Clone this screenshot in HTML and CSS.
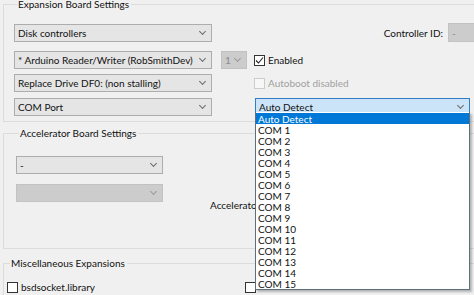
FILE: index.html
```html
<!DOCTYPE html>
<html lang="en">
<head>
  <meta charset="UTF-8" />
  <title>Expansions</title>
  <link rel="stylesheet" href="styles.css">
</head>
<body>
  <div class="window">
    <fieldset class="group group-expansion">
      <legend>Expansion Board Settings</legend>
      <div class="row row-1">
        <div class="combo wide"><span class="value">Disk controllers</span></div>
        <span class="id-label">Controller ID:</span>
        <div class="combo disabled id-box"><span class="value">-</span></div>
      </div>
      <div class="row row-2">
        <div class="combo wide"><span class="value">* Arduino Reader/Writer (RobSmithDev)</span></div>
        <div class="combo disabled tiny"><span class="value">1</span></div>
        <label class="check-item enabled-check">
          <span class="box checked">
            <svg width="9" height="9" viewBox="0 0 9 9"><path d="M1 4.5 L3.5 7 L8 1.5" fill="none" stroke="#222" stroke-width="1.1"/></svg>
          </span>
          Enabled
        </label>
      </div>
      <div class="row row-3">
        <div class="combo wide"><span class="value">Replace Drive DF0: (non stalling)</span></div>
        <label class="check-item disabled autoboot-check"><span class="box"></span>Autoboot disabled</label>
      </div>
      <div class="row row-4">
        <div class="combo wide"><span class="value">COM Port</span></div>
        <div class="combo focused port-combo"><span class="value">Auto Detect</span></div>
      </div>
    </fieldset>

    <fieldset class="group group-accel">
      <legend>Accelerator Board Settings</legend>
      <div class="accel-body">
        <div class="accel-combos">
          <div class="combo medium"><span class="value">-</span></div>
          <div class="combo medium disabled"><span class="value"></span></div>
        </div>
        <span class="accel-label">Accelerator memory:</span>
      </div>
    </fieldset>

    <fieldset class="group group-misc">
      <legend>Miscellaneous Expansions</legend>
      <div class="row misc-row">
        <label class="check-item"><span class="box"></span>bsdsocket.library</label>
        <label class="check-item second-check"><span class="box"></span></label>
      </div>
    </fieldset>

    <ul class="droplist">
      <li class="selected">Auto Detect</li>
      <li>COM 1</li>
      <li>COM 2</li>
      <li>COM 3</li>
      <li>COM 4</li>
      <li>COM 5</li>
      <li>COM 6</li>
      <li>COM 7</li>
      <li>COM 8</li>
      <li>COM 9</li>
      <li>COM 10</li>
      <li>COM 11</li>
      <li>COM 12</li>
      <li>COM 13</li>
      <li>COM 14</li>
      <li>COM 15</li>
    </ul>
  </div>
</body>
</html>
```

FILE: styles.css
```css
body {
  margin: 0;
  background: #f0f0f0;
  font-family: Lato, 'Noto Sans', sans-serif;
  font-size: 10px;
  color: #111;
  overflow: hidden;
  width: 474px;
  height: 295px;
}
.window {
  position: relative;
  height: 295px;
}
.group {
  border: 1px solid #dcdcdc;
  margin: 0 -30px 0 3px;
  padding: 0;
  min-width: 0;
}
.group legend {
  margin-left: 3px;
  padding: 0 2px 0 1px;
  line-height: 12px;
}
.group-expansion {
  margin-top: -2px;
  padding: 13px 0 5px 10px;
}
.group-accel {
  margin-top: 5px;
  padding: 17px 0 0 12px;
  height: 103px;
}
.group-misc {
  margin-top: 8px;
  padding: 12px 0 20px 3px;
}
.row {
  display: flex;
  align-items: center;
}
.row > * { flex-shrink: 0; }
.row-2 { margin-top: 9px; }
.row-3 { margin-top: 5px; }
.row-4 { margin-top: 6px; }

.combo {
  display: flex;
  align-items: center;
  box-sizing: border-box;
  height: 18px;
  padding: 0 5px 0 3px;
  background: #e5e5e5;
  border: 1px solid #adadad;
  white-space: nowrap;
  overflow: hidden;
}
.combo .value {
  flex: 1;
  overflow: hidden;
}
.combo::after {
  content: "";
  width: 4px;
  height: 4px;
  border-right: 1px solid #6a6a6a;
  border-bottom: 1px solid #6a6a6a;
  transform: rotate(45deg);
  margin: 0 1px 3px 0;
  flex-shrink: 0;
}
.combo.disabled {
  background: #cccccc;
  border-color: #c2c2c2;
  color: #8a8a8a;
}
.combo.disabled::after {
  border-color: #9a9a9a;
}
.combo.focused {
  background: #cce4f7;
  border-color: #2f7dc2;
}
.wide { width: 198px; }
.medium { width: 147px; }
.tiny {
  width: 26px;
  margin-left: 9px;
}
.id-label {
  width: 231px;
  text-align: right;
}
.id-box {
  margin-left: 5px;
  width: 60px;
  height: 19px;
}
.id-box::after {
  display: none;
}
.check-item {
  display: flex;
  align-items: center;
  gap: 3px;
  white-space: nowrap;
}
.box {
  box-sizing: border-box;
  width: 11px;
  height: 11px;
  border: 1px solid #333;
  background: #fff;
  display: flex;
  align-items: center;
  justify-content: center;
}
.enabled-check { margin-left: 7px; }
.autoboot-check { margin-left: 42px; }
.check-item.disabled { color: #a0a0a0; }
.check-item.disabled .box {
  border-color: #cccccc;
  background: #f7f7f7;
}
.port-combo {
  margin-left: 43px;
  width: 215px;
}

.accel-body {
  display: flex;
}
.accel-combos {
  display: flex;
  flex-direction: column;
  gap: 10px;
}
.accel-label {
  margin: 43px 0 0 47px;
  line-height: 12px;
  white-space: nowrap;
}

.second-check { margin-left: 150px; }

.droplist {
  position: absolute;
  left: 255px;
  top: 114px;
  width: 215px;
  box-sizing: border-box;
  margin: 0;
  padding: 1px 0 0;
  list-style: none;
  background: #fff;
  border: 1px solid #5b6f7c;
  border-top: none;
  box-shadow: 2px 2px 2px rgba(0, 0, 0, 0.25);
}
.droplist li {
  height: 11px;
  line-height: 13px;
  padding-left: 2px;
  overflow: hidden;
}
.droplist li.selected {
  background: #0078d7;
  color: #fff;
}
```
